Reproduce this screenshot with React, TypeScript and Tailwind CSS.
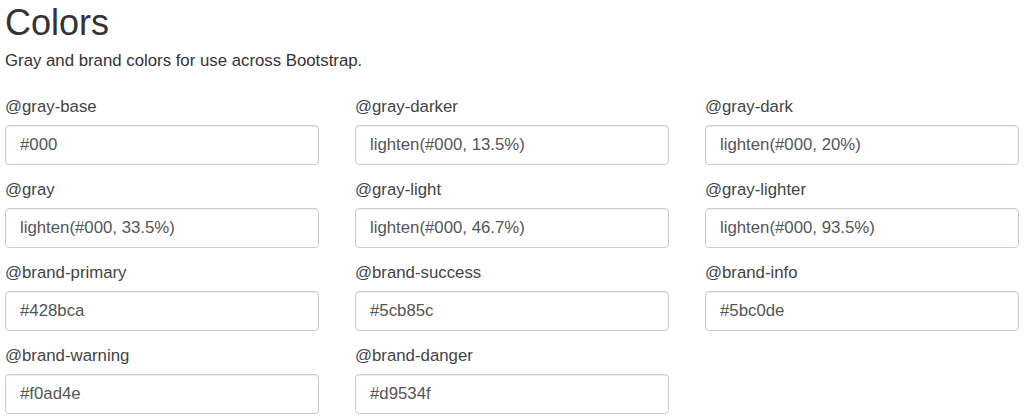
const fields = [
  { name: "@gray-base", value: "#000" },
  { name: "@gray-darker", value: "lighten(#000, 13.5%)" },
  { name: "@gray-dark", value: "lighten(#000, 20%)" },
  { name: "@gray", value: "lighten(#000, 33.5%)" },
  { name: "@gray-light", value: "lighten(#000, 46.7%)" },
  { name: "@gray-lighter", value: "lighten(#000, 93.5%)" },
  { name: "@brand-primary", value: "#428bca" },
  { name: "@brand-success", value: "#5cb85c" },
  { name: "@brand-info", value: "#5bc0de" },
  { name: "@brand-warning", value: "#f0ad4e" },
  { name: "@brand-danger", value: "#d9534f" },
]

export default function App() {
  return (
    <div className="min-h-screen bg-white pl-[5px] text-[#333] font-['Liberation_Sans',Arial,sans-serif]">
      <h1 className="mt-[3px] text-[36px] leading-[1.1] font-normal">Colors</h1>
      <p className="mt-[6px] text-[16.8px] leading-[24px]">Gray and brand colors for use across Bootstrap.</p>

      <div className="mt-[22px] grid grid-cols-[314px_314px_314px] gap-x-[36px] gap-y-[13px]">
        {fields.map((f) => (
          <div key={f.name} className="flex flex-col">
            <label className="text-[16.8px] leading-[24px] text-[#444] mb-[6px]">{f.name}</label>
            <input
              type="text"
              defaultValue={f.value}
              className="h-[40px] w-full rounded-[4px] border border-[#ccc] bg-white px-[14px] text-[16.8px] text-[#555] shadow-[inset_0_1px_1px_rgba(0,0,0,0.075)] outline-none"
            />
          </div>
        ))}
      </div>
    </div>
  )
}
